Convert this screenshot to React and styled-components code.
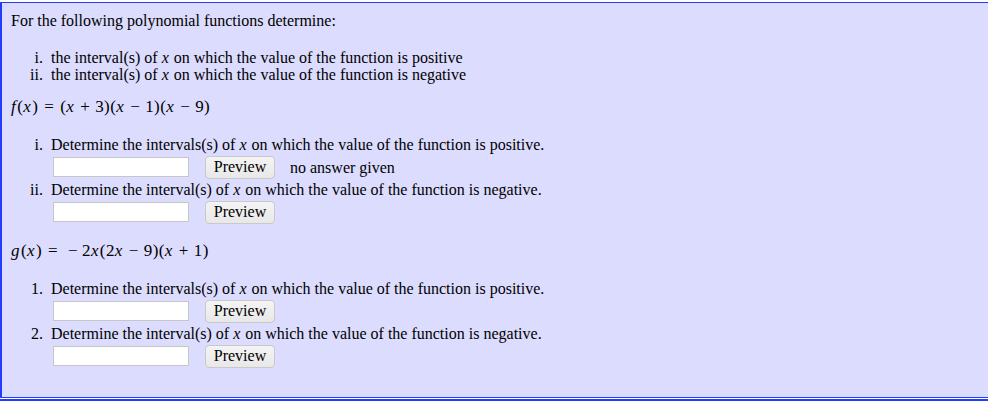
import React from 'react'
import styled, { createGlobalStyle } from 'styled-components'

const GlobalStyle = createGlobalStyle`
  html, body {
    margin: 0;
    padding: 0;
    background: #ffffff;
    overflow: hidden;
  }
  body {
    font-family: "Liberation Serif", "Times New Roman", serif;
    font-size: 16px;
    color: #000;
  }
`

const Problem = styled.div`
  box-sizing: border-box;
  margin-top: 2px;
  margin-right: -12px;
  height: 396px;
  background: #dcdcfe;
  border-top: 1px solid #1f3cff;
  border-bottom: 1px solid #1f3cff;
  border-left: 2px solid #1f3cff;
  padding: 9px 0 0 9px;
`

const NextBar = styled.div`
  margin-top: 1px;
  border-top: 2px solid #1f3cff;
`

const Intro = styled.p`
  margin: 0;
  line-height: 17px;
`

const List = styled.ol`
  margin: 20px 0 0 0;
  padding-left: 40px;
  line-height: 17px;

  li::marker {
    content: counter(list-item, ${(p) => p.$kind}) ".\\2002";
  }
`

const Formula = styled.div`
  margin-top: ${(p) => p.$top}px;
  font-size: 17px;
  line-height: 18px;
  letter-spacing: 0.4px;
`

const Var = styled.i`
  font-style: italic;
  padding-right: 1px;
`

const Op = styled.span`
  padding: 0 ${(p) => p.$pad ?? 5}px;
`

const AnswerRow = styled.div`
  display: flex;
  align-items: center;
  height: 28px;
  padding-left: 2px;
`

const AnswerInput = styled.input`
  box-sizing: border-box;
  width: 136px;
  height: 20px;
  margin: 0;
  border: 1px solid #c6c6c6;
  background: #fff;
  padding: 0 3px;
  font: inherit;
`

const PreviewButton = styled.button`
  box-sizing: border-box;
  margin-left: 16px;
  width: 70px;
  height: 23px;
  border: 1px solid #c9c9c9;
  border-radius: 4px;
  background: linear-gradient(#f4f4f4, #e8e8e8);
  font-family: "Liberation Serif", "Times New Roman", serif;
  font-size: 16px;
  color: #000;
  padding: 0;
`

const Feedback = styled.span`
  margin-left: 15px;
`

const X = () => <Var>x</Var>

const Part = ({ children, feedback }) => (
  <li>
    {children}
    <AnswerRow>
      <AnswerInput type="text" />
      <PreviewButton type="button">Preview</PreviewButton>
      {feedback && <Feedback>{feedback}</Feedback>}
    </AnswerRow>
  </li>
)

export default function App() {
  return (
    <>
      <GlobalStyle />
      <Problem>
        <Intro>For the following polynomial functions determine:</Intro>
        <List $kind="lower-roman">
          <li>the interval(s) of <X /> on which the value of the function is positive</li>
          <li>the interval(s) of <X /> on which the value of the function is negative</li>
        </List>

        <Formula $top={15}>
          <Var>f</Var>(<X />)<Op $pad={6}>=</Op>(<X /><Op>+</Op>3)(<X /><Op>−</Op>1)(<X /><Op>−</Op>9)
        </Formula>

        <List $kind="lower-roman">
          <Part feedback="no answer given">
            Determine the intervals(s) of <X /> on which the value of the function is positive.
          </Part>
          <Part>
            Determine the interval(s) of <X /> on which the value of the function is negative.
          </Part>
        </List>

        <Formula $top={16}>
          <Var>g</Var>(<X />)<Op $pad={6}>=</Op><Op $pad={4}>−</Op>2<X />(2<X /><Op>−</Op>9)(<X /><Op>+</Op>1)
        </Formula>

        <List $kind="decimal">
          <Part>
            Determine the intervals(s) of <X /> on which the value of the function is positive.
          </Part>
          <Part>
            Determine the interval(s) of <X /> on which the value of the function is negative.
          </Part>
        </List>
      </Problem>
      <NextBar />
    </>
  )
}
